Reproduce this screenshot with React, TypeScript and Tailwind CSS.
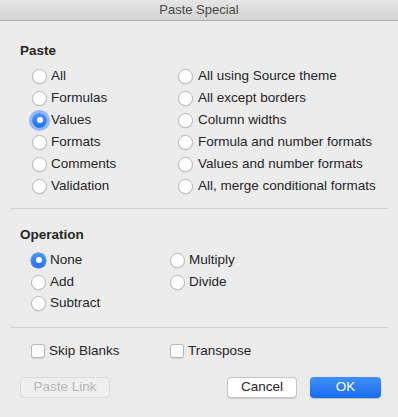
import React from "react";

const font = { fontFamily: '"Liberation Sans", Arial, sans-serif' };

function Radio({ checked = false, focused = false }: { checked?: boolean; focused?: boolean }) {
  if (checked) {
    return (
      <span
        className={`flex h-[15px] w-[15px] shrink-0 items-center justify-center rounded-full bg-gradient-to-b from-[#4b97f8] to-[#1b6ef3] ${
          focused ? "shadow-[0_0_0_3px_rgba(80,140,245,0.55)]" : "shadow-[0_0_0_0.5px_#1a5fd6]"
        }`}
      >
        <span className="h-[6px] w-[6px] rounded-full bg-white" />
      </span>
    );
  }
  return (
    <span className="h-[15px] w-[15px] shrink-0 rounded-full border border-[#b9b9b9] bg-white shadow-[0_0.5px_1px_rgba(0,0,0,0.12)]" />
  );
}

function Opt({ label, checked, focused, gap = "gap-[4px]" }: { label: string; checked?: boolean; focused?: boolean; gap?: string }) {
  return (
    <div className={`flex h-[22px] items-center ${gap}`}>
      <Radio checked={checked} focused={focused} />
      <span className="whitespace-nowrap">{label}</span>
    </div>
  );
}

function Check({ label }: { label: string }) {
  return (
    <div className="flex h-[16px] items-center gap-[4px]">
      <span className="h-[14px] w-[14px] shrink-0 rounded-[3px] border border-[#b9b9b9] bg-white shadow-[0_0.5px_1px_rgba(0,0,0,0.12)]" />
      <span>{label}</span>
    </div>
  );
}

export default function App() {
  const left = ["All", "Formulas", "Values", "Formats", "Comments", "Validation"];
  const right = [
    "All using Source theme",
    "All except borders",
    "Column widths",
    "Formula and number formats",
    "Values and number formats",
    "All, merge conditional formats",
  ];

  return (
    <div className="h-[417px] w-[398px] overflow-hidden bg-[#ececec] text-[13.5px] text-[#262626]" style={font}>
      <div className="flex h-[21px] items-center justify-center border-b border-[#aeaeae] bg-gradient-to-b from-[#e6e6e6] to-[#d3d3d3] text-[13px] text-[#4a4a4a]">
        Paste Special
      </div>

      <div className="mt-[22px] pl-[20px] font-bold leading-[16px]">Paste</div>
      <div className="mt-[6px] flex pl-[32px]">
        <div className="w-[146px]">
          {left.map((l) => (
            <Opt key={l} label={l} checked={l === "Values"} focused={l === "Values"} />
          ))}
        </div>
        <div>
          {right.map((l) => (
            <Opt key={l} label={l} gap="gap-[5px]" />
          ))}
        </div>
      </div>

      <div className="mx-[10px] mt-[11px] h-px bg-[#d4d4d4]" />

      <div className="mt-[18px] pl-[20px] font-bold leading-[16px]">Operation</div>
      <div className="mt-[6px] flex pl-[31px]">
        <div className="w-[139px]">
          <Opt label="None" checked />
          <Opt label="Add" />
          <div className="-mt-px">
            <Opt label="Subtract" />
          </div>
        </div>
        <div>
          <Opt label="Multiply" />
          <Opt label="Divide" />
        </div>
      </div>

      <div className="mx-[10px] mt-[13px] h-px bg-[#d4d4d4]" />

      <div className="mt-[15px] flex pl-[31px]">
        <div className="w-[139px]">
          <Check label="Skip Blanks" />
        </div>
        <Check label="Transpose" />
      </div>

      <div className="mt-[18px] flex items-center px-[20px]">
        <button className="flex h-[21px] w-[90px] items-center justify-center rounded-[4px] border border-[#dcdcdc] bg-[#efefef] text-[#b8b8b8]">
          Paste Link
        </button>
        <button className="ml-auto flex h-[21px] w-[70px] items-center justify-center rounded-[4px] border border-[#c6c6c6] bg-white shadow-[0_0.5px_1px_rgba(0,0,0,0.15)]">
          Cancel
        </button>
        <button className="ml-[13px] mr-[-3px] flex h-[21px] w-[71px] items-center justify-center rounded-[4px] bg-gradient-to-b from-[#3f90f8] to-[#1a6cf2] text-white shadow-[0_0.5px_1px_rgba(0,0,0,0.2)]">
          OK
        </button>
      </div>
    </div>
  );
}
